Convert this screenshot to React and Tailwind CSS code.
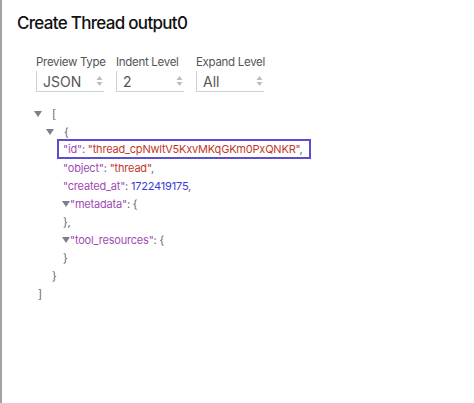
const font = { fontFamily: "Inter, 'Noto Sans', sans-serif" };

function Arrow({ className = "" }) {
  return (
    <svg width="8" height="6" viewBox="0 0 8 6" className={className}>
      <path d="M0 0 L8 0 L4 6 Z" fill="#7a8088" />
    </svg>
  );
}

function Spinner() {
  return (
    <svg width="7" height="12" viewBox="0 0 7 12">
      <path d="M0.5 5 L3.5 1 L6.5 5 Z" fill="#b8bcc2" />
      <path d="M0.5 7 L3.5 11 L6.5 7 Z" fill="#b8bcc2" />
    </svg>
  );
}

function Select({ label, value }) {
  return (
    <div className="flex w-[68px] flex-col">
      <div className="whitespace-nowrap text-[11.5px] leading-[15px] tracking-[-0.3px] text-[#555]">{label}</div>
      <div className="mt-[1px] flex h-[21px] items-center justify-between border-b border-l border-[#cfd2d6] pl-[6px] pr-[1px]">
        <span className="text-[14px] text-[#555]">{value}</span>
        <Spinner />
      </div>
    </div>
  );
}

const Key = ({ children }) => <span className="text-[#a04bb5]">"{children}"</span>;
const P = ({ children }) => <span className="text-[#666]">{children}</span>;

export default function App() {
  return (
    <div className="h-[403px] w-[474px] border-l-2 border-[#a3a3a3] bg-white" style={font}>
      <div className="pl-[15px] pt-[12px] text-[17px] font-medium leading-[22px] tracking-[-0.7px] text-[#111]">Create Thread output0</div>

      <div className="ml-[34px] mt-[21px] flex gap-[12px]">
        <Select label="Preview Type" value="JSON" />
        <Select label="Indent Level" value="2" />
        <Select label="Expand Level" value="All" />
      </div>

      <div className="mt-[13px] whitespace-nowrap pl-[32px] text-[11px] leading-[18px] tracking-[-0.2px]">
        <div className="flex items-center">
          <Arrow />
          <span className="ml-[10px] text-[#666]">[</span>
        </div>
        <div className="flex items-center pl-[12px]">
          <Arrow />
          <span className="ml-[10px] text-[#666]">{"{"}</span>
        </div>
        <div className="-mt-[2px] ml-[23px] w-fit border-2 border-[#5a50cf] pl-[4px] pr-[6px] leading-[16px]">
          <Key>id</Key>
          <P>: </P>
          <span className="text-[#c0392b]">"thread_cpNwltV5KxvMKqGKm0PxQNKR"</span>
          <P>,</P>
        </div>
        <div className="pl-[29px]">
          <Key>object</Key>
          <P>: </P>
          <span className="text-[#c0392b]">"thread"</span>
          <P>,</P>
        </div>
        <div className="pl-[29px]">
          <Key>created_at</Key>
          <P>: </P>
          <span className="text-[#3b3bd6]">1722419175</span>
          <P>,</P>
        </div>
        <div className="flex items-center pl-[28px]">
          <Arrow />
          <Key>metadata</Key>
          <P>: {"{"}</P>
        </div>
        <div className="pl-[29px]">
          <P>{"},"}</P>
        </div>
        <div className="flex items-center pl-[28px]">
          <Arrow />
          <Key>tool_resources</Key>
          <P>: {"{"}</P>
        </div>
        <div className="pl-[29px]">
          <P>{"}"}</P>
        </div>
        <div className="pl-[18px]">
          <P>{"}"}</P>
        </div>
        <div className="pl-[4px]">
          <P>]</P>
        </div>
      </div>
    </div>
  );
}
